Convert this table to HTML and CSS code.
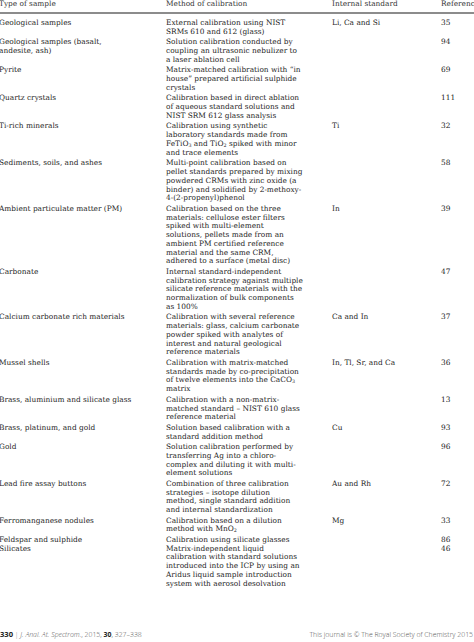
FILE: index.html
```html
<!DOCTYPE html>
<html>
<head>
<meta charset="utf-8">
<link rel="stylesheet" href="styles.css">
</head>
<body>
<div class="page">
  <div class="table">
    <div class="row head">
      <div>Type of sample</div>
      <div>Method of calibration</div>
      <div>Internal standard</div>
      <div>Reference</div>
    </div>
    <div class="row first">
      <div>Geological samples</div>
      <div>External calibration using NIST<br>SRMs 610 and 612 (glass)</div>
      <div>Li, Ca and Si</div>
      <div>35</div>
    </div>
    <div class="row">
      <div>Geological samples (basalt,<br>andesite, ash)</div>
      <div>Solution calibration conducted by<br>coupling an ultrasonic nebulizer to<br>a laser ablation cell</div>
      <div></div>
      <div>94</div>
    </div>
    <div class="row">
      <div>Pyrite</div>
      <div>Matrix-matched calibration with “in<br>house” prepared artificial sulphide<br>crystals</div>
      <div></div>
      <div>69</div>
    </div>
    <div class="row">
      <div>Quartz crystals</div>
      <div>Calibration based in direct ablation<br>of aqueous standard solutions and<br>NIST SRM 612 glass analysis</div>
      <div></div>
      <div>111</div>
    </div>
    <div class="row">
      <div>Ti-rich minerals</div>
      <div>Calibration using synthetic<br>laboratory standards made from<br>FeTiO<sub>3</sub> and TiO<sub>2</sub> spiked with minor<br>and trace elements</div>
      <div>Ti</div>
      <div>32</div>
    </div>
    <div class="row">
      <div>Sediments, soils, and ashes</div>
      <div>Multi-point calibration based on<br>pellet standards prepared by mixing<br>powdered CRMs with zinc oxide (a<br>binder) and solidified by 2-methoxy-<br>4-(2-propenyl)phenol</div>
      <div></div>
      <div>58</div>
    </div>
    <div class="row">
      <div>Ambient particulate matter (PM)</div>
      <div>Calibration based on the three<br>materials: cellulose ester filters<br>spiked with multi-element<br>solutions, pellets made from an<br>ambient PM certified reference<br>material and the same CRM,<br>adhered to a surface (metal disc)</div>
      <div>In</div>
      <div>39</div>
    </div>
    <div class="row">
      <div>Carbonate</div>
      <div>Internal standard-independent<br>calibration strategy against multiple<br>silicate reference materials with the<br>normalization of bulk components<br>as 100%</div>
      <div></div>
      <div>47</div>
    </div>
    <div class="row">
      <div>Calcium carbonate rich materials</div>
      <div>Calibration with several reference<br>materials: glass, calcium carbonate<br>powder spiked with analytes of<br>interest and natural geological<br>reference materials</div>
      <div>Ca and In</div>
      <div>37</div>
    </div>
    <div class="row">
      <div>Mussel shells</div>
      <div>Calibration with matrix-matched<br>standards made by co-precipitation<br>of twelve elements into the CaCO<sub>3</sub><br>matrix</div>
      <div>In, Tl, Sr, and Ca</div>
      <div>36</div>
    </div>
    <div class="row">
      <div>Brass, aluminium and silicate glass</div>
      <div>Calibration with a non-matrix-<br>matched standard – NIST 610 glass<br>reference material</div>
      <div></div>
      <div>13</div>
    </div>
    <div class="row">
      <div>Brass, platinum, and gold</div>
      <div>Solution based calibration with a<br>standard addition method</div>
      <div>Cu</div>
      <div>93</div>
    </div>
    <div class="row">
      <div>Gold</div>
      <div>Solution calibration performed by<br>transferring Ag into a chloro-<br>complex and diluting it with multi-<br>element solutions</div>
      <div></div>
      <div>96</div>
    </div>
    <div class="row">
      <div>Lead fire assay buttons</div>
      <div>Combination of three calibration<br>strategies – isotope dilution<br>method, single standard addition<br>and internal standardization</div>
      <div>Au and Rh</div>
      <div>72</div>
    </div>
    <div class="row">
      <div>Ferromanganese nodules</div>
      <div>Calibration based on a dilution<br>method with MnO<sub>2</sub></div>
      <div>Mg</div>
      <div>33</div>
    </div>
    <div class="row">
      <div>Feldspar and sulphide</div>
      <div>Calibration using silicate glasses</div>
      <div></div>
      <div>86</div>
    </div>
    <div class="row tight">
      <div>Silicates</div>
      <div>Matrix-independent liquid<br>calibration with standard solutions<br>introduced into the ICP by using an<br>Aridus liquid sample introduction<br>system with aerosol desolvation</div>
      <div></div>
      <div>46</div>
    </div>
  </div>
  <div class="footer">
    <div class="left"><b>330</b> <span class="bar">|</span> <i>J. Anal. At. Spectrom.</i>, 2015, <b class="vol">30</b>, 327–338</div>
    <div class="right">This journal is © The Royal Society of Chemistry 2015</div>
  </div>
</div>
</body>
</html>
```

FILE: styles.css
```css
html, body {
  margin: 0;
  padding: 0;
  background: #ffffff;
  overflow: hidden;
}

.page {
  width: 474px;
  height: 642px;
  overflow: hidden;
  display: flex;
  flex-direction: column;
}

.table {
  margin-left: -1px;
  font-family: "DejaVu Serif", "Liberation Serif", serif;
  font-size: 7.4px;
  line-height: 8.75px;
  color: #1c1c1c;
}

.row {
  display: grid;
  grid-template-columns: 167px 166px 109px 60px;
  padding-top: 1.8px;
  white-space: nowrap;
}

.row.head {
  padding-top: 0;
  padding-bottom: 3.3px;
  border-bottom: 2px solid #8c8c8c;
  margin-bottom: 3.2px;
  color: #333333;
}

.row.tight {
  padding-top: 0;
}

sub {
  font-size: 65%;
  line-height: 0;
  vertical-align: -0.25em;
}

.footer {
  margin-top: auto;
  margin-bottom: 3px;
  display: flex;
  justify-content: space-between;
  align-items: baseline;
  font-family: "Open Sans", "DejaVu Sans", sans-serif;
  font-weight: 300;
  font-size: 6.9px;
  color: #555555;
  padding-right: 1px;
  white-space: nowrap;
}

.footer .left b {
  font-weight: 700;
  color: #222222;
  font-size: 7.6px;
}

.footer .left b.vol {
  font-size: 6.9px;
}

.footer .bar {
  color: #888888;
}
```
